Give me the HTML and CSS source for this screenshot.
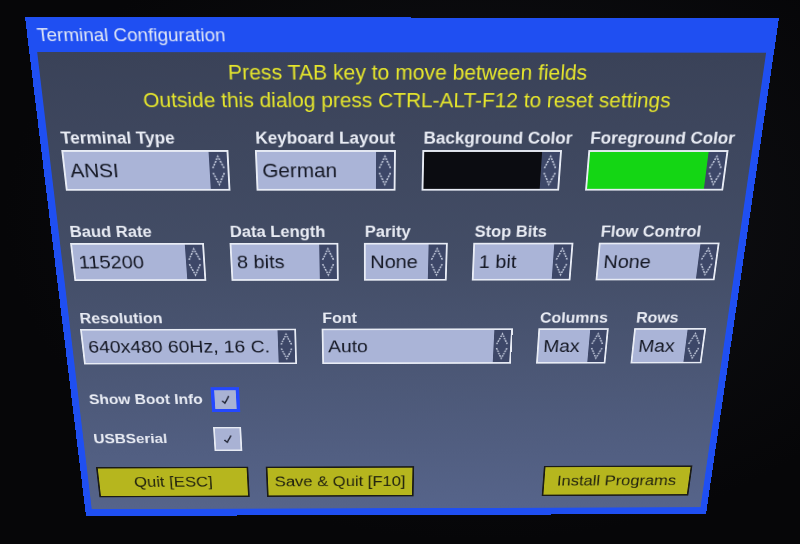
FILE: index.html
```html
<!DOCTYPE html>
<html lang="en">
<head>
<meta charset="utf-8">
<title>Terminal Configuration</title>
<link rel="stylesheet" href="styles.css">
</head>
<body>
<div class="screen">
  <div class="dialog">
    <div class="titlebar">Terminal Configuration</div>
    <div class="panel">
      <div class="notice">
        <p>Press TAB key to move between fields</p>
        <p>Outside this dialog press CTRL-ALT-F12 to reset settings</p>
      </div>

      <div class="row row1">
        <div class="field w-term">
          <div class="label">Terminal Type</div>
          <div class="box"><span class="val">ANSI</span><span class="spin"><svg viewBox="0 0 19 41"><polyline points="3.5,18 9.5,5 15.5,18"/><polyline points="3.5,23 9.5,36 15.5,23"/></svg></span></div>
        </div>
        <div class="field w-kbd">
          <div class="label">Keyboard Layout</div>
          <div class="box"><span class="val">German</span><span class="spin"><svg viewBox="0 0 19 41"><polyline points="3.5,18 9.5,5 15.5,18"/><polyline points="3.5,23 9.5,36 15.5,23"/></svg></span></div>
        </div>
        <div class="field w-bg">
          <div class="label">Background Color</div>
          <div class="box"><span class="val swatch-black"></span><span class="spin"><svg viewBox="0 0 19 41"><polyline points="3.5,18 9.5,5 15.5,18"/><polyline points="3.5,23 9.5,36 15.5,23"/></svg></span></div>
        </div>
        <div class="field w-fg">
          <div class="label">Foreground Color</div>
          <div class="box"><span class="val swatch-green"></span><span class="spin"><svg viewBox="0 0 19 41"><polyline points="3.5,18 9.5,5 15.5,18"/><polyline points="3.5,23 9.5,36 15.5,23"/></svg></span></div>
        </div>
      </div>

      <div class="row row2">
        <div class="field w-baud">
          <div class="label">Baud Rate</div>
          <div class="box"><span class="val">115200</span><span class="spin"><svg viewBox="0 0 19 41"><polyline points="3.5,18 9.5,5 15.5,18"/><polyline points="3.5,23 9.5,36 15.5,23"/></svg></span></div>
        </div>
        <div class="field w-data">
          <div class="label">Data Length</div>
          <div class="box"><span class="val">8 bits</span><span class="spin"><svg viewBox="0 0 19 41"><polyline points="3.5,18 9.5,5 15.5,18"/><polyline points="3.5,23 9.5,36 15.5,23"/></svg></span></div>
        </div>
        <div class="field w-parity">
          <div class="label">Parity</div>
          <div class="box"><span class="val">None</span><span class="spin"><svg viewBox="0 0 19 41"><polyline points="3.5,18 9.5,5 15.5,18"/><polyline points="3.5,23 9.5,36 15.5,23"/></svg></span></div>
        </div>
        <div class="field w-stop">
          <div class="label">Stop Bits</div>
          <div class="box"><span class="val">1 bit</span><span class="spin"><svg viewBox="0 0 19 41"><polyline points="3.5,18 9.5,5 15.5,18"/><polyline points="3.5,23 9.5,36 15.5,23"/></svg></span></div>
        </div>
        <div class="field w-flow">
          <div class="label">Flow Control</div>
          <div class="box"><span class="val">None</span><span class="spin"><svg viewBox="0 0 19 41"><polyline points="3.5,18 9.5,5 15.5,18"/><polyline points="3.5,23 9.5,36 15.5,23"/></svg></span></div>
        </div>
      </div>

      <div class="row row3">
        <div class="field w-res">
          <div class="label">Resolution</div>
          <div class="box"><span class="val">640x480 60Hz, 16 C.</span><span class="spin"><svg viewBox="0 0 19 41"><polyline points="3.5,18 9.5,5 15.5,18"/><polyline points="3.5,23 9.5,36 15.5,23"/></svg></span></div>
        </div>
        <div class="field w-font">
          <div class="label">Font</div>
          <div class="box"><span class="val">Auto</span><span class="spin"><svg viewBox="0 0 19 41"><polyline points="3.5,18 9.5,5 15.5,18"/><polyline points="3.5,23 9.5,36 15.5,23"/></svg></span></div>
        </div>
        <div class="field w-cols">
          <div class="label">Columns</div>
          <div class="box"><span class="val">Max</span><span class="spin"><svg viewBox="0 0 19 41"><polyline points="3.5,18 9.5,5 15.5,18"/><polyline points="3.5,23 9.5,36 15.5,23"/></svg></span></div>
        </div>
        <div class="field w-rows">
          <div class="label">Rows</div>
          <div class="box"><span class="val">Max</span><span class="spin"><svg viewBox="0 0 19 41"><polyline points="3.5,18 9.5,5 15.5,18"/><polyline points="3.5,23 9.5,36 15.5,23"/></svg></span></div>
        </div>
      </div>

      <div class="check-row first">
        <span class="cb-label">Show Boot Info</span>
        <span class="cb focus"><svg viewBox="0 0 20 20"><path d="M5 11 L8.5 14.5 L14 4"/></svg></span>
      </div>
      <div class="check-row">
        <span class="cb-label">USBSerial</span>
        <span class="cb"><svg viewBox="0 0 20 20"><path d="M5 11 L8.5 14.5 L14 4"/></svg></span>
      </div>

      <div class="buttons">
        <div class="btn btn-quit">Quit [ESC]</div>
        <div class="btn btn-save">Save &amp; Quit [F10]</div>
        <div class="btn btn-install">Install Programs</div>
      </div>
    </div>
  </div>
</div>
</body>
</html>
```

FILE: styles.css
```css
html, body {
  margin: 0;
  padding: 0;
  width: 800px;
  height: 544px;
  overflow: hidden;
  background: #09090c;
}

.screen {
  width: 800px;
  height: 544px;
  background: radial-gradient(ellipse at 60% 40%, #111216 0%, #060608 70%);
}

/* Flat 760x600 dialog, projected onto the photographed screen's quad */
.dialog {
  width: 760px;
  height: 600px;
  box-sizing: border-box;
  background: #1f4ff2;
  padding: 0 8px 10px 8px;
  display: flex;
  flex-direction: column;
  transform-origin: 0 0;
  transform: matrix3d(0.9992, 0.00148, 0, 0.0000091,
                      0.13276, 1.01824, 0, 0.00036158,
                      0, 0, 1, 0,
                      25, 17, 0, 1);
  will-change: transform;
  font-family: "Liberation Sans", Arial, sans-serif;
}

.titlebar {
  height: 35px;
  line-height: 35px;
  padding-left: 2px;
  color: #e2e8f6;
  font-size: 19px;
  flex: none;
}

.panel {
  flex: 1;
  background: linear-gradient(#3a4258 0%, #434d66 40%, #56648a 100%);
  padding: 6px 0 17px 11px;
  display: flex;
  flex-direction: column;
}

.notice {
  color: #e6e62c;
  font-size: 21.7px;
  line-height: 29px;
  text-align: center;
}
.notice p { margin: 0; }

.row {
  display: flex;
  gap: 28px;
}
.row1 { margin-top: 16px; margin-left: 2px; }
.row2 { margin-top: 37px; }
.row3 { margin-top: 36px; gap: 29px; }

.label {
  color: #e9ecf4;
  font-weight: bold;
  font-size: 18px;
  line-height: 20px;
  margin-bottom: 3px;
  padding-left: 1px;
  white-space: nowrap;
}

.box {
  height: 45px;
  box-sizing: border-box;
  border: 2px solid #e8ecf5;
  background: #aab4d7;
  display: flex;
}

.val {
  flex: 1;
  padding-left: 5px;
  font-size: 22px;
  line-height: 41px;
  color: #151824;
  white-space: nowrap;
  overflow: hidden;
}
.swatch-black { background: #0b0c11; }
.swatch-green { background: #14d614; }

.spin {
  width: 19px;
  flex: none;
  background: #3d4768;
}
.spin svg {
  display: block;
  width: 19px;
  height: 41px;
  fill: none;
  stroke: #c3cadc;
  stroke-width: 1.7;
  stroke-dasharray: 2.2 1.1;
}

.w-term { width: 176px; }
.w-kbd { width: 149px; }
.w-bg { width: 148px; }
.w-fg { width: 149px; }

.w-baud { width: 146px; }
.w-data { width: 119px; }
.w-parity { width: 92px; }
.w-stop { width: 110px; }
.w-flow { width: 133px; }

.w-res { width: 244px; }
.w-font { width: 217px; }
.w-cols { width: 80px; }
.w-rows { width: 82px; }

.check-row {
  display: flex;
  align-items: center;
  margin-top: 20px;
}
.check-row.first { margin-top: 30px; }

.cb-label {
  width: 143px;
  padding-left: 1px;
  box-sizing: border-box;
  color: #e9ecf4;
  font-weight: bold;
  font-size: 18px;
}

.cb {
  width: 33px;
  height: 33px;
  box-sizing: border-box;
  border: 2px solid #e6eaf3;
  background: #a9b2d4;
  display: flex;
  align-items: center;
  justify-content: center;
}
.cb.focus {
  border: 4px solid #2448ff;
}
.cb svg {
  width: 18px;
  height: 18px;
  fill: none;
  stroke: #1a1d2c;
  stroke-width: 1.8;
}

.buttons {
  display: flex;
  margin-top: 22px;
}

.btn {
  height: 43px;
  box-sizing: border-box;
  border: 2px solid #1b1b16;
  background: #b6b61e;
  color: #23240f;
  font-size: 20px;
  line-height: 39px;
  text-align: center;
  white-space: nowrap;
}
.btn-quit { width: 182px; }
.btn-save { width: 178px; margin-left: 21px; }
.btn-install { width: 179px; margin-left: 156px; }
```
